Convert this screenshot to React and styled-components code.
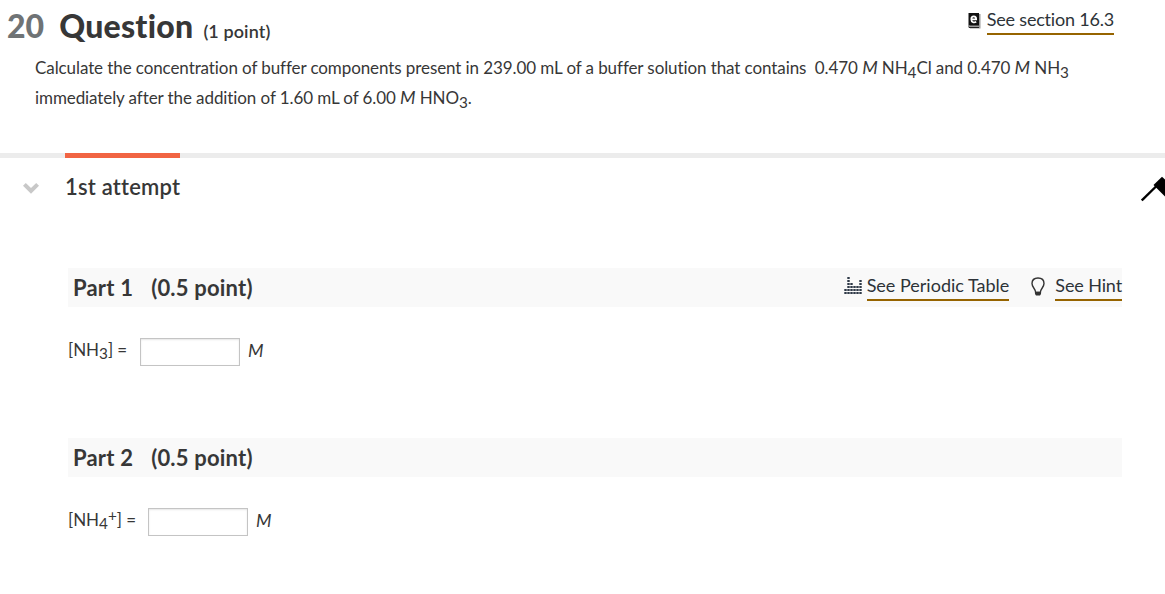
import styled, { createGlobalStyle } from "styled-components";

const App = () => {
  return (
    <>
      <GlobalStyle />
      <Page>
        <Header>
          <Title>
            <Number>20</Number>
            <Name>Question</Name>
            <Points>(1 point)</Points>
          </Title>
          <Tool $gap="6px">
            <BookIcon />
            <ToolLink href="#section" $spacing="-0.2px">
              See section 16.3
            </ToolLink>
          </Tool>
        </Header>
        <Prompt>
          Calculate the concentration of buffer components present in 239.00 mL
          of a buffer solution that contains&nbsp; 0.470 <Unit>M</Unit> NH
          <Sub>4</Sub>Cl and 0.470 <Unit>M</Unit> NH<Sub>3</Sub>
          <br />
          immediately after the addition of 1.60 mL of 6.00 <Unit>M</Unit> HNO
          <Sub>3</Sub>.
        </Prompt>
        <Progress>
          <ProgressTab />
        </Progress>
        <AttemptRow>
          <Chevron />
          <AttemptTitle>1st attempt</AttemptTitle>
          <FeedbackMark />
        </AttemptRow>
        <Part>
          <PartHeader>
            <PartName>Part 1</PartName>
            <PartName>(0.5 point)</PartName>
            <Tools>
              <Tool $gap="4px">
                <TableIcon />
                <ToolLink href="#table">See Periodic Table</ToolLink>
              </Tool>
              <Tool $gap="10px">
                <BulbIcon />
                <ToolLink href="#hint" $spacing="-0.12px">
                  See Hint
                </ToolLink>
              </Tool>
            </Tools>
          </PartHeader>
          <Answer>
            <Label $width="72px">
              [NH<Sub>3</Sub>] =
            </Label>
            <Field aria-label="NH3 concentration" />
            <Unit>M</Unit>
          </Answer>
        </Part>
        <Part>
          <PartHeader>
            <PartName>Part 2</PartName>
            <PartName>(0.5 point)</PartName>
          </PartHeader>
          <Answer>
            <Label $width="80px">
              [NH<Sub>4</Sub>
              <Sup>+</Sup>] =
            </Label>
            <Field aria-label="NH4+ concentration" />
            <Unit>M</Unit>
          </Answer>
        </Part>
      </Page>
    </>
  );
};

const BookIcon = () => (
  <svg width="13" height="16" viewBox="0 0 13 16">
    <path d="M2 1h10.500v14.500H2z" fill="#999" />
    <path d="M0.500 0H11v12.500H0.500z" fill="#111" />
    <path d="M1 12.500v2h10" fill="none" stroke="#222" />
    <path
      d="M3.500 6.300h4.700c0-3.900-4.900-3.900-4.900 0 0 3.400 3 3.700 4.900 2.500"
      fill="none"
      stroke="#fff"
      strokeWidth="1.700"
    />
  </svg>
);

const bars = [2, 6, 4, 3, 3, 5];

const TableIcon = () => (
  <svg width="19" height="21" viewBox="0 0 19 21">
    {bars.map((count, col) =>
      Array.from({ length: count }, (_, row) => (
        <rect
          key={`${col}-${row}`}
          x={col * 3 + 0.3}
          y={16 - row * 3}
          width="2.4"
          height="2"
          fill="#2f3a48"
        />
      ))
    )}
  </svg>
);

const BulbIcon = () => (
  <svg width="14" height="20" viewBox="0 0 14 20">
    <path
      d="M4.600 15.500C4.600 11.500 1 10.500 1 6.600 1 3 3.600 1 7 1s6 2 6 5.600c0 3.900-3.600 4.900-3.600 8.900z"
      fill="none"
      stroke="#333"
      strokeWidth="1.400"
    />
    <path d="M4 14.800h6v2.200l-1 1.500H5L4 17z" fill="#333" />
  </svg>
);

const Chevron = () => (
  <svg width="16" height="11" viewBox="0 0 16 11">
    <path d="M2.800 0 8 5 13.200 0 16 2.800 8 10.800 0 2.800z" fill="#c8c8c8" />
  </svg>
);

const FeedbackMark = () => (
  <Mark width="24" height="26" viewBox="0 0 24 26">
    <path d="M0.800 24.500 16 9.500" stroke="#000" strokeWidth="2.400" />
    <path d="M12.500 9 21 0.800 24 3.500V20.500z" fill="#000" />
  </Mark>
);

const GlobalStyle = createGlobalStyle`
  * {
    box-sizing: border-box;
  }

  body {
    margin: 0;
    background-color: #fff;
    color: #373737;
    font-family: Lato, sans-serif;
    font-size: 18px;
    font-variant-ligatures: none;
    overflow: hidden;
  }

  svg {
    display: block;
    flex-shrink: 0;
  }
`;

const Page = styled.main`
  width: 1165px;
  height: 594px;
`;

const Header = styled.header`
  display: flex;
  justify-content: space-between;
  align-items: flex-start;
  height: 53px;
  padding: 6px 51px 0 7px;
`;

const Title = styled.h1`
  display: flex;
  align-items: baseline;
  margin: 0;
  line-height: 40px;
`;

const Number = styled.span`
  color: #6f7375;
  font-size: 32px;
  font-weight: 900;
`;

const Name = styled.span`
  margin-left: 15px;
  font-size: 32px;
  font-weight: 900;
  letter-spacing: 0.25px;
`;

const Points = styled.span`
  margin-left: 10px;
  font-size: 18px;
  font-weight: 600;
  letter-spacing: 0.1px;
`;

const Tool = styled.div`
  display: flex;
  align-items: center;
  gap: ${({ $gap }) => $gap};
`;

const ToolLink = styled.a`
  height: 29px;
  border-bottom: 2px solid #966400;
  color: #2d3338;
  font-size: 18px;
  letter-spacing: ${({ $spacing }) => $spacing || "normal"};
  line-height: 26px;
  text-decoration: none;
  white-space: nowrap;
`;

const Prompt = styled.p`
  height: 100px;
  margin: 0;
  padding-left: 35px;
  font-size: 17px;
  letter-spacing: -0.09px;
  line-height: 30px;
  white-space: nowrap;
`;

const Unit = styled.em`
  font-size: 18px;
  line-height: 1;
`;

const Sub = styled.sub`
  position: relative;
  bottom: -0.25em;
  font-size: 0.9em;
  line-height: 0;
  vertical-align: baseline;
`;

const Sup = styled.sup`
  position: relative;
  top: -0.3em;
  font-size: 0.9em;
  line-height: 0;
  vertical-align: baseline;
`;

const Progress = styled.div`
  height: 5px;
  padding-left: 65px;
  background-color: #ececec;
`;

const ProgressTab = styled.div`
  width: 115px;
  height: 5px;
  background-color: #f16443;
`;

const AttemptRow = styled.div`
  display: flex;
  align-items: center;
  height: 110px;
  padding: 0 0 49px 23px;
`;

const AttemptTitle = styled.h2`
  margin: 0 0 3px 26px;
  font-size: 22px;
  font-weight: 600;
  letter-spacing: 0.2px;
  line-height: 30px;
`;

const Mark = styled.svg`
  margin-left: auto;
`;

const Part = styled.section`
  height: 170px;
  margin-left: 68px;
`;

const PartHeader = styled.div`
  display: flex;
  align-items: center;
  width: 1054px;
  height: 39px;
  padding-left: 5px;
  background-color: #f9f9f9;
`;

const PartName = styled.h3`
  margin: 0 18px 0 0;
  font-size: 22px;
  font-weight: 700;
  letter-spacing: 0.2px;
`;

const Tools = styled.div`
  display: flex;
  gap: 22px;
  margin-left: auto;
  padding-bottom: 2px;
`;

const Answer = styled.div`
  display: flex;
  align-items: center;
  height: 28px;
  margin-top: 31px;
  font-size: 17px;

  > em {
    padding-bottom: 5px;
  }
`;

const Label = styled.label`
  width: ${({ $width }) => $width};
  padding-bottom: 6px;
  letter-spacing: -0.04px;
  white-space: nowrap;
`;

const Field = styled.input`
  width: 100px;
  height: 28px;
  margin-right: 8px;
  border: 1px solid #c4c4c4;
  background-color: #fff;
  box-shadow: inset 0 1px 2px rgba(0, 0, 0, 0.1);
`;

export default App;
